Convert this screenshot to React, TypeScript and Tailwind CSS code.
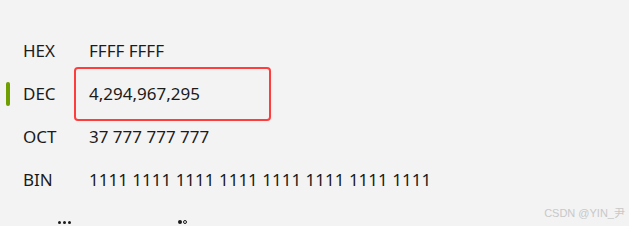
const rows = [
  { label: "HEX", value: "FFFF FFFF" },
  { label: "DEC", value: "4,294,967,295", active: true },
  { label: "OCT", value: "37 777 777 777" },
  { label: "BIN", value: "1111 1111 1111 1111 1111 1111 1111 1111" },
];

export default function App() {
  return (
    <div
      className="relative w-[629px] h-[226px] overflow-hidden bg-[#f3f3f3] text-[#1b1b1b]"
      style={{ fontFamily: '"Noto Sans", "Liberation Sans", sans-serif' }}
    >
      <div className="pt-[29px] flex flex-col">
        {rows.map((row) => (
          <div key={row.label} className="relative flex items-center h-[43px]">
            {row.active && (
              <div className="absolute left-[6px] top-[10px] w-[4px] h-[24px] rounded-full bg-[#6f9e00]" />
            )}
            <div className="w-[89px] pl-[23px] text-[17px] leading-none">{row.label}</div>
            {row.active ? (
              <div className="-ml-[15px] -my-[5px] w-[197px] h-[54px] flex items-center pl-[13px] border-2 border-[#ff3d3d] rounded-[4px] text-[17px] leading-none">
                {row.value}
              </div>
            ) : (
              <div className="text-[17px] leading-none">{row.value}</div>
            )}
          </div>
        ))}
      </div>
      <div className="absolute left-[58px] top-[221px] flex gap-[2px]">
        <span className="w-[3px] h-[3px] rounded-full bg-[#1b1b1b]" />
        <span className="w-[3px] h-[3px] rounded-full bg-[#1b1b1b]" />
        <span className="w-[3px] h-[3px] rounded-full bg-[#1b1b1b]" />
      </div>
      <div className="absolute left-[178px] top-[220px] flex gap-[1px]">
        <span className="w-[4px] h-[4px] rounded-full bg-[#1b1b1b]" />
        <span className="w-[4px] h-[4px] rounded-full border border-[#1b1b1b]" />
      </div>
      <div
        className="absolute right-[4px] bottom-[5px] text-[11px] text-[#c8c8c8]"
        style={{ fontFamily: '"Liberation Sans", "Noto Sans CJK SC", sans-serif' }}
      >
        CSDN @YIN_尹
      </div>
    </div>
  );
}
